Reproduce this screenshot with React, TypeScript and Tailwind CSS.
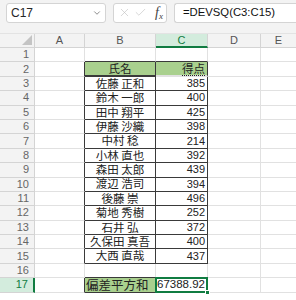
import { Check, ChevronDown, X } from "lucide-react";
import clsx from "clsx";

const people: [string, number][] = [
  ["佐藤 正和", 385],
  ["鈴木 一郎", 400],
  ["田中 翔平", 425],
  ["伊藤 沙織", 398],
  ["中村 稔", 214],
  ["小林 直也", 392],
  ["森田 太郎", 439],
  ["渡辺 浩司", 394],
  ["後藤 崇", 496],
  ["菊地 秀樹", 252],
  ["石井 弘", 372],
  ["久保田 真吾", 400],
  ["大西 直哉", 437],
];

const jp = "font-['Noto_Sans_CJK_JP',sans-serif]";
const num = "font-['Liberation_Sans',sans-serif]";

function Toolbar() {
  return (
    <div className="flex h-[25px] items-center bg-[#f3f3f3] pl-[6px]">
      <div className="flex h-[20px] w-[100px] items-center justify-between rounded-[3px] border border-[#d4d4d4] bg-white pl-[4px] pr-[3px]">
        <span className={`${num} text-[12px] text-[#262626]`}>C17</span>
        <ChevronDown size={10} strokeWidth={1.6} className="text-[#555]" />
      </div>
      <div className="ml-[7px] flex h-[20px] w-[54px] items-center gap-[3px] rounded-[3px] border border-[#d4d4d4] bg-white pl-[4px] pr-[3px]">
        <X size={13} strokeWidth={1.1} className="text-[#bdbdbd]" />
        <Check size={13} strokeWidth={1.1} className="text-[#bdbdbd]" />
        <span className="ml-auto font-['Liberation_Serif',serif] text-[14px] italic leading-none text-[#444]">
          f<sub className="text-[9px]">x</sub>
        </span>
      </div>
      <div className="ml-[7px] flex h-[20px] flex-1 items-center rounded-l-[3px] border border-r-0 border-[#d4d4d4] bg-white pl-[8px]">
        <span className={`${num} text-[11.3px] text-[#111]`}>=DEVSQ(C3:C15)</span>
      </div>
    </div>
  );
}

function HeaderRow() {
  return (
    <div className={`flex h-[15px] border-t border-[#e3e3e3] bg-[#f3f3f3] ${num} text-[11px] leading-none text-[#555]`}>
      <div className="flex w-[35px] shrink-0 items-end justify-end border-r border-b border-[#d4d4d4] pb-[2px] pr-[2px]">
        <svg width="10" height="10" viewBox="0 0 10 10">
          <polygon points="10,0 10,10 0,10" fill="#c4c4c4" />
        </svg>
      </div>
      <div className="flex w-[50px] shrink-0 items-center justify-center border-r border-b border-[#d4d4d4]">A</div>
      <div className="flex w-[71px] shrink-0 items-center justify-center border-r border-b border-[#d4d4d4]">B</div>
      <div className="flex w-[52px] shrink-0 items-center justify-center border-r border-b-2 border-r-[#d4d4d4] border-b-[#107c41] bg-[#d3ecdd] text-[#107c41]">
        C
      </div>
      <div className="flex w-[53px] shrink-0 items-center justify-center border-r border-b border-[#d4d4d4]">D</div>
      <div className="flex flex-1 items-center justify-center border-b border-[#d4d4d4]">E</div>
    </div>
  );
}

function Row({ r }: { r: number }) {
  const inTable = r >= 2 && r <= 15;
  const person = r >= 3 && r <= 15 ? people[r - 3] : null;
  const sel = r === 17;
  return (
    <div className="flex h-[14.4px] leading-none">
      <div
        className={clsx(
          "flex w-[35px] shrink-0 items-center justify-end border-b border-[#d4d4d4] pr-[5px] text-[11px]",
          num,
          sel ? "border-r-2 border-r-[#107c41] bg-[#d3ecdd] text-[#107c41]" : "border-r bg-[#f3f3f3] text-[#666]"
        )}
      >
        {r}
      </div>
      <div
        className={clsx(
          "w-[50px] shrink-0 border-r border-b border-b-[#e1e1e1]",
          inTable || sel ? "border-r-[#3a3a3a]" : "border-r-[#e1e1e1]"
        )}
      />
      <div
        className={clsx(
          "flex w-[71px] shrink-0 items-center overflow-visible whitespace-nowrap border-r text-[11.5px] text-[#222]",
          jp,
          inTable || sel ? "border-r-[#3a3a3a]" : "border-r-[#e1e1e1]",
          r === 2 ? "border-b-2 border-b-[#3a3a3a]" : "border-b",
          r === 1 || (r >= 3 && r <= 17) ? "border-b-[#3a3a3a]" : "",
          r === 2 || sel ? "bg-[#a9d08e]" : "",
          sel ? "justify-start pl-[1px] text-[12.5px]" : "justify-center"
        )}
      >
        {r === 2 ? "氏名" : person ? person[0] : sel ? "偏差平方和" : null}
      </div>
      <div
        className={clsx(
          "relative flex w-[52px] shrink-0 items-center justify-end border-r pr-[2px] text-[11px] text-[#222]",
          inTable ? "border-r-[#3a3a3a]" : "border-r-[#e1e1e1]",
          r === 2 ? "border-b-2 border-b-[#3a3a3a]" : "border-b",
          r === 1 || (r >= 3 && r <= 15) ? "border-b-[#3a3a3a]" : "border-b-[#e1e1e1]",
          r === 2 ? "justify-center bg-[#a9d08e]" : ""
        )}
      >
        {r === 2 ? (
          <span className={`${jp} text-[11.5px] underline decoration-dotted underline-offset-2`}>得点</span>
        ) : person ? (
          <span className={num}>{person[1]}</span>
        ) : sel ? (
          <span className={`${num} text-[11.5px]`}>67388.92</span>
        ) : null}
        {sel && (
          <>
            <div className="pointer-events-none absolute -top-[1px] -left-[1px] -right-[1px] -bottom-[1px] border-2 border-[#107c41]" />
            <div className="absolute -right-[3px] -bottom-[3px] h-[5px] w-[5px] border border-white bg-[#107c41]" />
          </>
        )}
      </div>
      <div className="w-[53px] shrink-0 border-r border-b border-[#e1e1e1]" />
      <div className="flex-1 border-b border-[#e1e1e1]" />
    </div>
  );
}

export default function App() {
  return (
    <div className="h-[300px] w-[296px] overflow-hidden bg-white">
      <Toolbar />
      <div className="h-[8px] bg-[#f3f3f3]" />
      <HeaderRow />
      {Array.from({ length: 17 }, (_, i) => (
        <Row key={i} r={i + 1} />
      ))}
    </div>
  );
}
